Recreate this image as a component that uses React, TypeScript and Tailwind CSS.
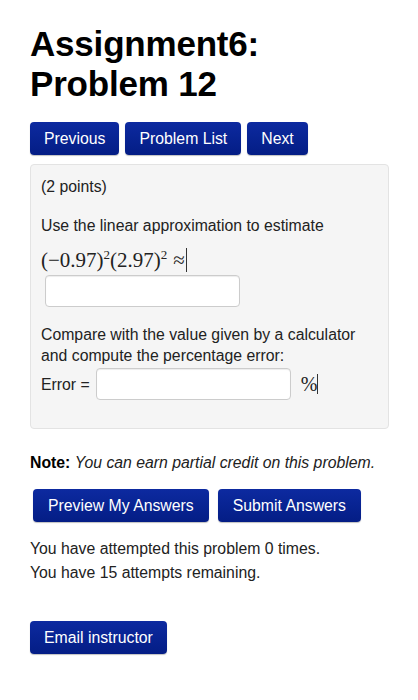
const btn =
  'rounded-[4px] bg-gradient-to-b from-[#0d2aa0] to-[#041d85] text-white text-[15.8px] leading-none shadow-[0_1px_1px_rgba(0,0,0,0.25)]';

const serif = "[font-family:'Liberation_Serif','Times_New_Roman',serif]";

export default function App() {
  return (
    <div className="min-h-[700px] bg-white px-[30px] pt-[24px] pb-10 text-[#222] [font-family:'Liberation_Sans',Arial,sans-serif]">
      <h1 className="text-[35px] font-bold leading-[40px] text-black tracking-[-0.2px]">
        Assignment6:
        <br />
        Problem 12
      </h1>

      <div className="mt-[18px] flex gap-[6px]">
        <button className={`${btn} h-[33px] px-[14px]`}>Previous</button>
        <button className={`${btn} h-[33px] px-[14px]`}>Problem List</button>
        <button className={`${btn} h-[33px] px-[14px]`}>Next</button>
      </div>

      <div className="mt-[9px] w-[359px] rounded-[4px] border border-[#e3e3e3] bg-[#f5f5f5] px-[10px] pt-[11px] pb-[28px] text-[15.8px] leading-[21px]">
        <p>(2 points)</p>
        <p className="mt-[18px]">Use the linear approximation to estimate</p>
        <div className={`mt-[12px] flex items-center text-[21px] leading-[24px] ${serif}`}>
          <span>
            (−0.97)<sup className="text-[13px] top-[-0.65em]">2</sup>(2.97)<sup className="text-[13px] top-[-0.65em]">2</sup>
            <span className="ml-[6px]">≈</span>
          </span>
          <span className="ml-[1px] inline-block h-[24px] w-px bg-[#333]" />
        </div>
        <input className="ml-[4px] mt-[3px] block h-[32px] w-[195px] rounded-[4px] border border-[#ccc] bg-white shadow-[inset_0_1px_1px_rgba(0,0,0,0.075)]" />
        <p className="mt-[17px]">
          Compare with the value given by a calculator
          <br />
          and compute the percentage error:
        </p>
        <div className="mt-[2px] flex items-center">
          <span>Error =</span>
          <input className="ml-[6px] h-[32px] w-[195px] rounded-[4px] border border-[#ccc] bg-white shadow-[inset_0_1px_1px_rgba(0,0,0,0.075)]" />
          <span className={`ml-[10px] text-[20px] ${serif}`}>%</span>
          <span className="inline-block h-[20px] w-px bg-[#333]" />
        </div>
      </div>

      <p className="mt-[23px] text-[15.8px] leading-[21px]">
        <b className="text-black">Note:</b> <i>You can earn partial credit on this problem.</i>
      </p>

      <div className="mt-[16px] ml-[3px] flex gap-[9px]">
        <button className={`${btn} h-[33px] px-[15px]`}>Preview My Answers</button>
        <button className={`${btn} h-[33px] px-[15px]`}>Submit Answers</button>
      </div>

      <p className="mt-[15px] text-[15.8px] leading-[24px]">
        You have attempted this problem 0 times.
        <br />
        You have 15 attempts remaining.
      </p>

      <button className={`${btn} mt-[36px] h-[33px] px-[14px]`}>Email instructor</button>
    </div>
  );
}
